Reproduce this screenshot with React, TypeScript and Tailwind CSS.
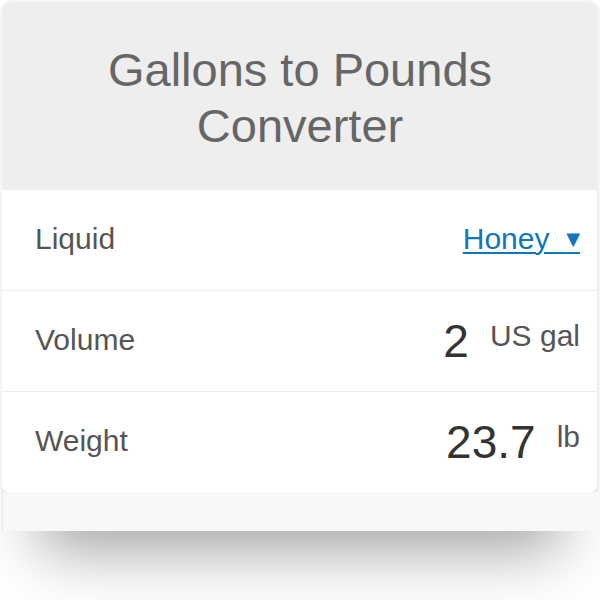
// Gallons to Pounds converter widget

const ROWS = [
  { label: "Liquid", kind: "select" as const, value: "Honey" },
  { label: "Volume", kind: "number" as const, value: "2", unit: "US gal" },
  { label: "Weight", kind: "number" as const, value: "23.7", unit: "lb" },
];

export default function App() {
  return (
    <div className="h-[600px] w-[600px] bg-white font-['Liberation_Sans',Arial,sans-serif]">
      <div className="rounded-t-[12px] border-2 border-b-0 border-[#f6f6f6] bg-[#eeeeee] shadow-[0_58px_60px_-40px_rgba(0,0,0,0.38)]">
        {/* Header */}
        <div className="h-[188px] pt-[40px] text-center">
          <h1 className="text-[47px] leading-[56px] text-[#666666]">
            Gallons to Pounds
            <br />
            Converter
          </h1>
        </div>

        {/* Rows */}
        <div className="mr-px rounded-b-[6px] bg-white shadow-[0_1px_2px_rgba(0,0,0,0.08)]">
          {ROWS.map((row, i) => (
            <div
              key={row.label}
              className={`flex items-center justify-between pl-[33px] pr-[17px] ${
                i < ROWS.length - 1 ? "h-[101px] border-b border-[#ededed]" : "h-[100px]"
              }`}
            >
              <span className="mt-[-3px] text-[30px] leading-none text-[#555555]">{row.label}</span>
              {row.kind === "select" ? (
                <a
                  href="#"
                  className="mt-[-3px] whitespace-pre text-[30px] leading-none text-[#1078b8] underline decoration-[2px] underline-offset-[3px]"
                >
                  {"Honey  "}
                  <span className="font-['DejaVu_Sans'] text-[18px] align-[4px]">▼</span>
                </a>
              ) : (
                <div className="flex items-start gap-[21px]">
                  <span className="text-[46px] leading-none text-[#333333]">{row.value}</span>
                  <span className="mt-[3px] text-[30px] leading-none text-[#555555]">{row.unit}</span>
                </div>
              )}
            </div>
          ))}
        </div>

        {/* Footer */}
        <div className="h-[39px] border-l border-[#e6e6e6] bg-[#f8f8f8]" />
      </div>
    </div>
  );
}
